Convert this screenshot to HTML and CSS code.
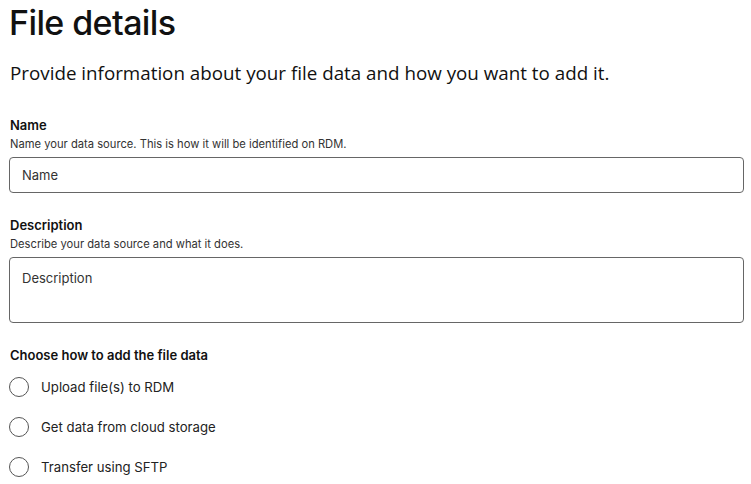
FILE: index.html
```html
<!DOCTYPE html>
<html lang="en">
<head>
  <meta charset="UTF-8" />
  <meta name="viewport" content="width=device-width, initial-scale=1.0"/>
  <title>File details</title>
  <link rel="stylesheet" href="styles.css">
</head>
<body>
  <div class="page">
    <h1>File details</h1>
    <p class="intro">Provide information about your file data and how you want to add it.</p>

    <div class="field">
      <label class="label" for="name">Name</label>
      <div class="hint">Name your data source. This is how it will be identified on RDM.</div>
      <input id="name" class="input" type="text" placeholder="Name">
    </div>

    <div class="field">
      <label class="label" for="description">Description</label>
      <div class="hint">Describe your data source and what it does.</div>
      <textarea id="description" class="input textarea" placeholder="Description"></textarea>
    </div>

    <div class="field">
      <div class="label">Choose how to add the file data</div>
      <div class="options">
        <label class="option"><input type="radio" name="method"><span class="dot"></span>Upload file(s) to RDM</label>
        <label class="option"><input type="radio" name="method"><span class="dot"></span>Get data from cloud storage</label>
        <label class="option"><input type="radio" name="method"><span class="dot"></span>Transfer using SFTP</label>
      </div>
    </div>
  </div>
</body>
</html>
```

FILE: styles.css
```css
body {
  margin: 0;
  background: #fff;
  color: #111;
  font-family: "Inter", "Noto Sans", sans-serif;
}

.page {
  width: 735px;
  padding: 0 0 0 9px;
}

h1 {
  margin: 0;
  padding-top: 3px;
  font-size: 34px;
  font-weight: 500;
  line-height: 40px;
  letter-spacing: -0.6px;
}

.intro {
  margin: 17px 0 0 1px;
  font-family: "Open Sans", sans-serif;
  font-size: 18.8px;
  line-height: 26px;
  color: #111;
}

.field {
  margin-top: 22px;
}

.intro + .field {
  margin-top: 29px;
}

.label {
  display: block;
  padding-left: 1px;
  font-size: 13px;
  font-weight: 600;
  line-height: 20px;
}

.hint {
  padding-left: 1px;
  font-size: 11.2px;
  line-height: 18px;
  color: #333;
}

.input {
  display: block;
  box-sizing: border-box;
  width: 735px;
  height: 36px;
  margin-top: 4px;
  padding: 0 12px;
  border: 1px solid #666;
  border-radius: 4px;
  font-family: inherit;
  font-size: 13px;
  color: #111;
}

.input::placeholder {
  color: #333;
}

.textarea {
  height: 66px;
  padding-top: 12px;
  resize: none;
}

.options {
  display: flex;
  flex-direction: column;
  gap: 20px;
  margin-top: 12px;
}

.option {
  display: flex;
  align-items: center;
  gap: 12px;
  font-size: 13.2px;
  line-height: 20px;
  color: #222;
}

.option input {
  display: none;
}

.dot {
  box-sizing: border-box;
  width: 20px;
  height: 20px;
  border: 1px solid #555;
  border-radius: 50%;
}
```
